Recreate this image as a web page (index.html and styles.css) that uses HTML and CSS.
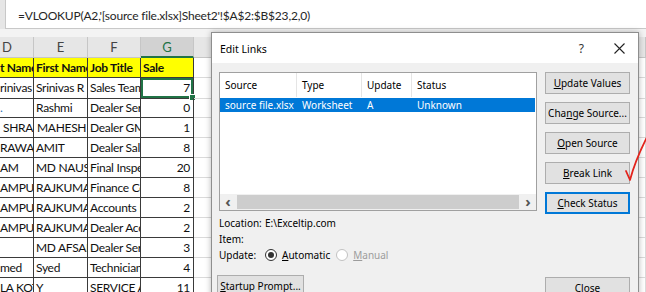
FILE: index.html
```html
<!DOCTYPE html>
<html>
<head>
<meta charset="utf-8">
<link rel="stylesheet" href="styles.css">
</head>
<body>
<div class="screen">
  <div class="fx">
    <div class="fx-left"></div>
    <div class="fx-box">=VLOOKUP(A2,'[source file.xlsx]Sheet2'!$A$2:$B$23,2,0)</div>
  </div>
  <div class="fx-gap"></div>
  <div class="sheet">
    <div class="row hdr">
      <div class="c">D</div><div class="c">E</div><div class="c">F</div><div class="c sel">G</div><div class="c h"></div>
    </div>
    <div class="row yel">
      <div class="c b d">t Name</div><div class="c b">First Name</div><div class="c b">Job Title</div><div class="c b">Sale</div><div class="c h"></div>
    </div>
    <div class="row">
      <div class="c d">rinivas R</div><div class="c">Srinivas R</div><div class="c">Sales Team</div><div class="c n active">7<span class="handle"></span></div><div class="c h"></div>
    </div>
    <div class="row">
      <div class="c d blue">.</div><div class="c">Rashmi</div><div class="c">Dealer Service</div><div class="c n">0</div><div class="c h"></div>
    </div>
    <div class="row">
      <div class="c d ind">SHRA</div><div class="c ind">MAHESH</div><div class="c">Dealer GM</div><div class="c n">1</div><div class="c h"></div>
    </div>
    <div class="row">
      <div class="c d">RAWA</div><div class="c">AMIT</div><div class="c">Dealer Sales</div><div class="c n">8</div><div class="c h"></div>
    </div>
    <div class="row">
      <div class="c d">AM</div><div class="c">MD NAUSHAD</div><div class="c">Final Inspection</div><div class="c n">20</div><div class="c h"></div>
    </div>
    <div class="row">
      <div class="c d">AMPUR</div><div class="c">RAJKUMAR</div><div class="c">Finance Co</div><div class="c n">8</div><div class="c h"></div>
    </div>
    <div class="row">
      <div class="c d">AMPUR</div><div class="c">RAJKUMAR</div><div class="c">Accounts I</div><div class="c n">2</div><div class="c h"></div>
    </div>
    <div class="row">
      <div class="c d">AMPUR</div><div class="c">RAJKUMAR</div><div class="c">Dealer Acc</div><div class="c n">2</div><div class="c h"></div>
    </div>
    <div class="row">
      <div class="c d"></div><div class="c">MD AFSAR</div><div class="c">Dealer Serv</div><div class="c n">3</div><div class="c h"></div>
    </div>
    <div class="row">
      <div class="c d">med</div><div class="c">Syed</div><div class="c">Technician</div><div class="c n">4</div><div class="c h"></div>
    </div>
    <div class="row">
      <div class="c d">LA KOT</div><div class="c">Y</div><div class="c">SERVICE A</div><div class="c n">11</div><div class="c h"></div>
    </div>
  </div>

  <div class="dialog">
    <div class="titlebar">
      <span class="title">Edit Links</span>
      <span class="help">?</span>
      <svg class="close-x" width="11" height="11" viewBox="0 0 11 11"><path d="M0.5 0.5 L10.5 10.5 M10.5 0.5 L0.5 10.5" stroke="#222" stroke-width="1.1" fill="none"/></svg>
    </div>
    <div class="dbody">
      <div class="leftcol">
        <div class="listbox">
          <div class="lrow lhead">
            <div class="lc c1">Source</div><div class="lc c2">Type</div><div class="lc c3">Update</div><div class="lc c4">Status</div>
          </div>
          <div class="lrow lsel">
            <div class="lc c1">source file.xlsx</div><div class="lc c2">Worksheet</div><div class="lc c3">A</div><div class="lc c4">Unknown</div>
          </div>
          <div class="lspace"></div>
          <div class="hscroll">
            <div class="arrow">&#8249;</div>
            <div class="thumb"></div>
            <div class="arrow">&#8250;</div>
          </div>
        </div>
        <div class="info">
          <div class="iline"><span class="lbl">Location:</span><span>E:\Exceltip.com</span></div>
          <div class="iline"><span class="lbl">Item:</span></div>
          <div class="iline"><span class="lbl">Update:</span>
            <span class="radio on"></span><span class="rtext"><u>A</u>utomatic</span>
            <span class="radio off"></span><span class="rtext dis"><u>M</u>anual</span>
          </div>
        </div>
        <div class="btn startup"><u>S</u>tartup Prompt...</div>
      </div>
      <div class="rightcol">
        <div class="btn"><u>U</u>pdate Values</div>
        <div class="btn">Cha<u>n</u>ge Source...</div>
        <div class="btn"><u>O</u>pen Source</div>
        <div class="btn"><u>B</u>reak Link</div>
        <div class="btn focus"><u>C</u>heck Status</div>
        <div class="btn closebtn">Close</div>
      </div>
    </div>
  </div>

  <svg class="tick" width="24" height="50" viewBox="0 0 24 50"><path d="M2 36 L6 45 Q11 26 23 2" stroke="#e3231c" stroke-width="1.8" fill="none" stroke-linecap="round" stroke-linejoin="round"/></svg>
</div>
</body>
</html>
```

FILE: styles.css
```css
html, body {
  margin: 0;
  padding: 0;
}
body {
  width: 646px;
  height: 292px;
  overflow: hidden;
  background: #ffffff;
}
.screen {
  position: relative;
  width: 646px;
  height: 292px;
  overflow: hidden;
  font-family: Lato, "Liberation Sans", sans-serif;
}
.fx {
  display: flex;
  height: 29px;
  background: #e6e6e6;
}
.fx-left {
  width: 5px;
}
.fx-box {
  flex: 1;
  background: #fff;
  border-left: 1px solid #c8c8c8;
  border-bottom: 1px solid #c8c8c8;
  padding-left: 12px;
  font-size: 12px;
  letter-spacing: -0.2px;
  line-height: 31px;
  color: #262626;
  white-space: nowrap;
}
.fx-gap {
  height: 8px;
  background: #f3f3f3;
}
.sheet {
  margin-left: -19px;
  font-size: 12px;
  letter-spacing: -0.3px;
  color: #111;
}
.row {
  display: grid;
  grid-template-columns: 53px 54px 53px 53px 1fr;
  height: 20px;
}
.c {
  border-right: 1px solid #3a3a3a;
  border-bottom: 1px solid #3a3a3a;
  overflow: hidden;
  white-space: nowrap;
  padding: 0 2px;
  line-height: 20px;
  position: relative;
}
.c.d {
  padding-left: 19px;
}
.c.ind {
  padding-left: 3px;
}
.c.d.ind {
  padding-left: 22px;
}
.c.h {
  border-right: 1px solid #dadada;
  border-bottom: 1px solid #dadada;
}
.c.n {
  text-align: right;
  padding-right: 3px;
}
.c.b {
  font-weight: bold;
}
.c.blue {
  color: #2e75b6;
}
.hdr {
  height: 21px;
}
.hdr .c {
  background: #e6e6e6;
  border-right: 1px solid #c6c6c6;
  border-bottom: 1px solid #c6c6c6;
  text-align: center;
  color: #444;
  font-size: 13px;
  letter-spacing: 0;
  line-height: 21px;
}
.hdr .c.sel {
  background: #d2d2d2;
  color: #217346;
  border-bottom: 2px solid #217346;
}
.hdr .c.h {
  background: #e6e6e6;
}
.yel .c {
  background: #ffff00;
}
.yel .c.h {
  background: #fff;
}
.c.active {
  overflow: visible;
  box-shadow: inset 0 0 0 2px #217346;
}
.handle {
  position: absolute;
  right: -3px;
  bottom: -3px;
  width: 5px;
  height: 5px;
  background: #217346;
  border: 1px solid #fff;
}

/* dialog */
.dialog {
  position: absolute;
  left: 211px;
  top: 32px;
  width: 426px;
  height: 280px;
  background: #f0f0f0;
  border: 1px solid #8e8e8e;
  box-shadow: 0 0 6px rgba(0,0,0,0.28);
  font-family: "Noto Sans", "Open Sans", sans-serif;
  font-size: 10px;
  color: #000;
}
.titlebar {
  height: 30px;
  background: #fff;
  display: flex;
  align-items: center;
}
.title {
  padding-left: 8px;
  font-size: 10.5px;
  flex: 1;
  padding-top: 1px;
}
.help {
  font-size: 12px;
  color: #333;
  margin-right: 30px;
}
.close-x {
  margin-right: 13px;
}
.dbody {
  display: flex;
  padding: 9px 5px 0 7px;
  gap: 8px;
}
.leftcol {
  width: 318px;
  display: flex;
  flex-direction: column;
}
.listbox {
  height: 137px;
  background: #fff;
  border: 1px solid #a0a0a0;
  display: flex;
  flex-direction: column;
}
.lrow {
  display: grid;
  grid-template-columns: 77px 65px 50px 1fr;
  white-space: nowrap;
}
.lhead {
  height: 24px;
  line-height: 24px;
}
.lhead .lc {
  border-right: 1px solid #e5e5e5;
}
.lhead .lc.c4 {
  border-right: none;
}
.lc {
  padding-left: 5px;
  overflow: hidden;
}
.lsel {
  height: 14px;
  line-height: 14px;
  background: #0078d7;
  color: #fff;
  margin: 1px 1px 0 0;
}
.lspace {
  flex: 1;
}
.hscroll {
  height: 16px;
  display: flex;
  background: #f0f0f0;
}
.arrow {
  width: 16px;
  text-align: center;
  font-size: 15px;
  line-height: 15px;
  color: #555;
  font-weight: bold;
}
.thumb {
  flex: 1;
  background: #cdcdcd;
  margin: 1px 1px;
}
.info {
  margin-top: 4px;
}
.iline {
  height: 16px;
  line-height: 16px;
  display: flex;
  align-items: center;
  white-space: nowrap;
}
.lbl {
  width: 46px;
  flex: none;
}
.radio {
  width: 10px;
  height: 10px;
  border-radius: 50%;
  border: 1px solid #333;
  background: #fff;
  position: relative;
  margin: 0 5px 0 0;
  flex: none;
}
.radio.on::after {
  content: "";
  position: absolute;
  left: 2px;
  top: 2px;
  width: 6px;
  height: 6px;
  border-radius: 50%;
  background: #333;
}
.radio.off {
  border-color: #c2c2c2;
  margin-left: 6px;
}
.rtext.dis {
  color: #9c9c9c;
}
.btn {
  height: 20px;
  line-height: 20px;
  border: 1px solid #adadad;
  background: #e1e1e1;
  text-align: center;
  white-space: nowrap;
}
.startup {
  width: 85px;
  margin-top: 12px;
  margin-left: -2px;
}
.rightcol {
  width: 85px;
  display: flex;
  flex-direction: column;
  gap: 8px;
}
.btn.focus {
  border: 2px solid #0078d7;
  height: 18px;
  line-height: 18px;
}
.closebtn {
  margin-top: 55px;
}
.tick {
  position: absolute;
  left: 624px;
  top: 135px;
}
```
